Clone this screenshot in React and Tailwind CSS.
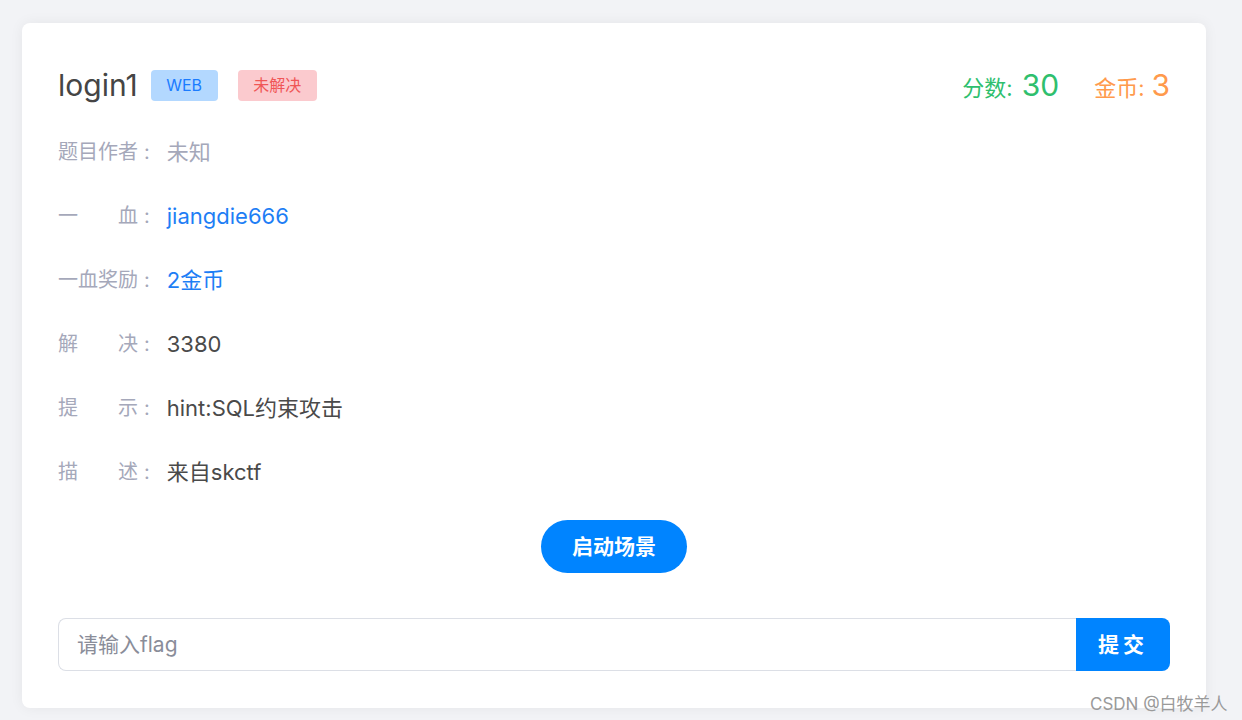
const rows = [
  { label: '题目作者', value: '未知', tone: 'text-[#a5a8ba]' },
  { label: '一血', value: 'jiangdie666', tone: 'text-[#1e7ef5]' },
  { label: '一血奖励', value: '2金币', tone: 'text-[#1e7ef5]' },
  { label: '解决', value: '3380', tone: 'text-[#4a4a4a]' },
  { label: '提示', value: 'hint:SQL约束攻击', tone: 'text-[#4a4a4a]' },
  { label: '描述', value: '来自skctf', tone: 'text-[#4a4a4a]' },
];

export default function App() {
  return (
    <div
      className="relative w-[1242px] h-[720px] overflow-hidden bg-[#f2f3f6] pt-[23px] pl-[22px]"
      style={{ fontFamily: 'Inter, "Noto Sans CJK SC", sans-serif' }}
    >
      <div className="w-[1184px] bg-white rounded-[8px] shadow-[0_0_14px_rgba(0,0,0,0.06)] pt-[46px] px-9 pb-[37px]">
        {/* Title row */}
        <div className="flex items-center h-8">
          <span className="text-[30px] leading-8 text-[#454545]">login1</span>
          <span className="ml-[13px] h-[31px] w-[67px] rounded-[4px] bg-[#b3d8ff] text-[#1a7cff] text-[16px] flex items-center justify-center">WEB</span>
          <span className="ml-5 h-[31px] w-[79px] rounded-[4px] bg-[#fbcace] text-[#f05656] text-[16px] flex items-center justify-center">未解决</span>
          <div className="ml-auto flex items-baseline">
            <span className="text-[22px] text-[#2fbf6e]">分数:</span>
            <span className="ml-[9px] text-[30px] text-[#2fbf6e]">30</span>
            <span className="ml-[35px] text-[22px] text-[#ff9a4c]">金币:</span>
            <span className="ml-[7px] text-[30px] text-[#ff9a4c]">3</span>
          </div>
        </div>

        {/* Info rows */}
        <div className="mt-[19px]">
          {rows.map((r) => (
            <div key={r.label} className="h-16 flex items-center">
              <span className="w-[80px] text-[20px] text-[#a5a8ba] [text-align-last:justify]">{r.label}</span>
              <span className="ml-[6px] text-[20px] text-[#a5a8ba]">:</span>
              <span className={`ml-[17px] text-[22px] ${r.tone}`}>{r.value}</span>
            </div>
          ))}
        </div>

        <div className="mt-4 flex justify-center">
          <button className="h-[53px] w-[146px] rounded-full bg-[#0084ff] text-white text-[21px] font-bold">启动场景</button>
        </div>

        <div className="mt-[45px] flex h-[53px]">
          <div className="flex-1 border border-[#dcdfe6] border-r-0 rounded-l-[8px] flex items-center px-[18px] text-[21px] text-[#8a8d99]">
            请输入flag
          </div>
          <button className="w-[94px] rounded-r-[8px] bg-[#0084ff] text-white text-[21px] font-bold tracking-[4px]">提交</button>
        </div>
      </div>

      <span className="absolute left-[1090px] top-[692px] text-[17px] text-[#9a9a9a]">CSDN @白牧羊人</span>
    </div>
  );
}
